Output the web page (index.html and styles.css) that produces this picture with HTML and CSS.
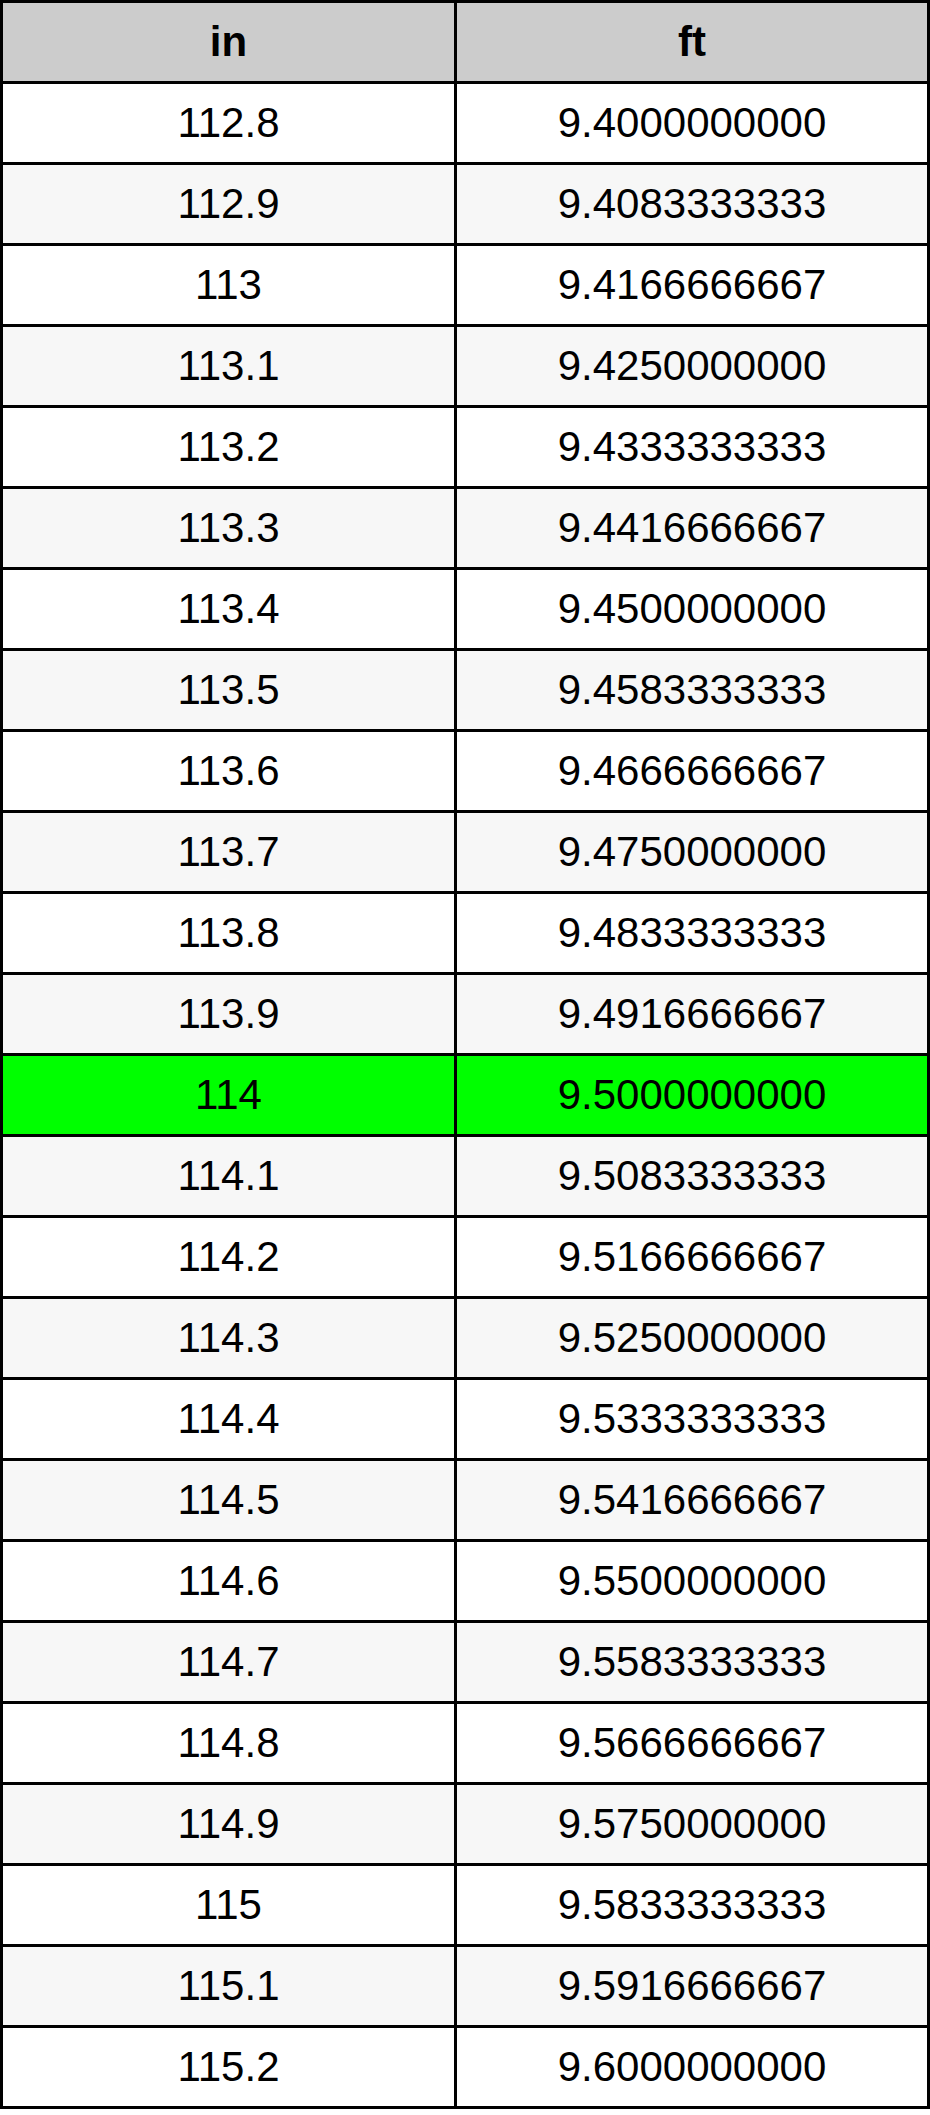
FILE: index.html
```html
<!DOCTYPE html>
<html>
<head>
<meta charset="utf-8">
<link rel="stylesheet" href="styles.css">
</head>
<body>
<table class="conv">
<thead>
<tr><th class="c1">in</th><th class="c2">ft</th></tr>
</thead>
<tbody>
<tr><td>112.8</td><td>9.4000000000</td></tr>
<tr class="alt"><td>112.9</td><td>9.4083333333</td></tr>
<tr><td>113</td><td>9.4166666667</td></tr>
<tr class="alt"><td>113.1</td><td>9.4250000000</td></tr>
<tr><td>113.2</td><td>9.4333333333</td></tr>
<tr class="alt"><td>113.3</td><td>9.4416666667</td></tr>
<tr><td>113.4</td><td>9.4500000000</td></tr>
<tr class="alt"><td>113.5</td><td>9.4583333333</td></tr>
<tr><td>113.6</td><td>9.4666666667</td></tr>
<tr class="alt"><td>113.7</td><td>9.4750000000</td></tr>
<tr><td>113.8</td><td>9.4833333333</td></tr>
<tr class="alt"><td>113.9</td><td>9.4916666667</td></tr>
<tr class="hl"><td>114</td><td>9.5000000000</td></tr>
<tr class="alt"><td>114.1</td><td>9.5083333333</td></tr>
<tr><td>114.2</td><td>9.5166666667</td></tr>
<tr class="alt"><td>114.3</td><td>9.5250000000</td></tr>
<tr><td>114.4</td><td>9.5333333333</td></tr>
<tr class="alt"><td>114.5</td><td>9.5416666667</td></tr>
<tr><td>114.6</td><td>9.5500000000</td></tr>
<tr class="alt"><td>114.7</td><td>9.5583333333</td></tr>
<tr><td>114.8</td><td>9.5666666667</td></tr>
<tr class="alt"><td>114.9</td><td>9.5750000000</td></tr>
<tr><td>115</td><td>9.5833333333</td></tr>
<tr class="alt"><td>115.1</td><td>9.5916666667</td></tr>
<tr><td>115.2</td><td>9.6000000000</td></tr>
</tbody>
</table>
</body>
</html>
```
FILE: styles.css
```css
html, body {
  margin: 0;
  padding: 0;
  background: #ffffff;
}
.conv {
  width: 930px;
  table-layout: fixed;
  border-collapse: separate;
  border-spacing: 3px;
  background: #000000;
  font-family: "Liberation Sans", Arial, sans-serif;
  font-size: 42px;
  color: #000000;
}
.conv th,
.conv td {
  height: 78px;
  padding: 0;
  text-align: center;
  vertical-align: middle;
  background: #ffffff;
  line-height: 1;
}
.conv th {
  background: #cccccc;
  font-weight: bold;
}
.conv .c1 { width: 451px; }
.conv .c2 { width: 470px; }
.conv tr.alt td { background: #f7f7f7; }
.conv tr.hl td { background: #00ff00; }
```
